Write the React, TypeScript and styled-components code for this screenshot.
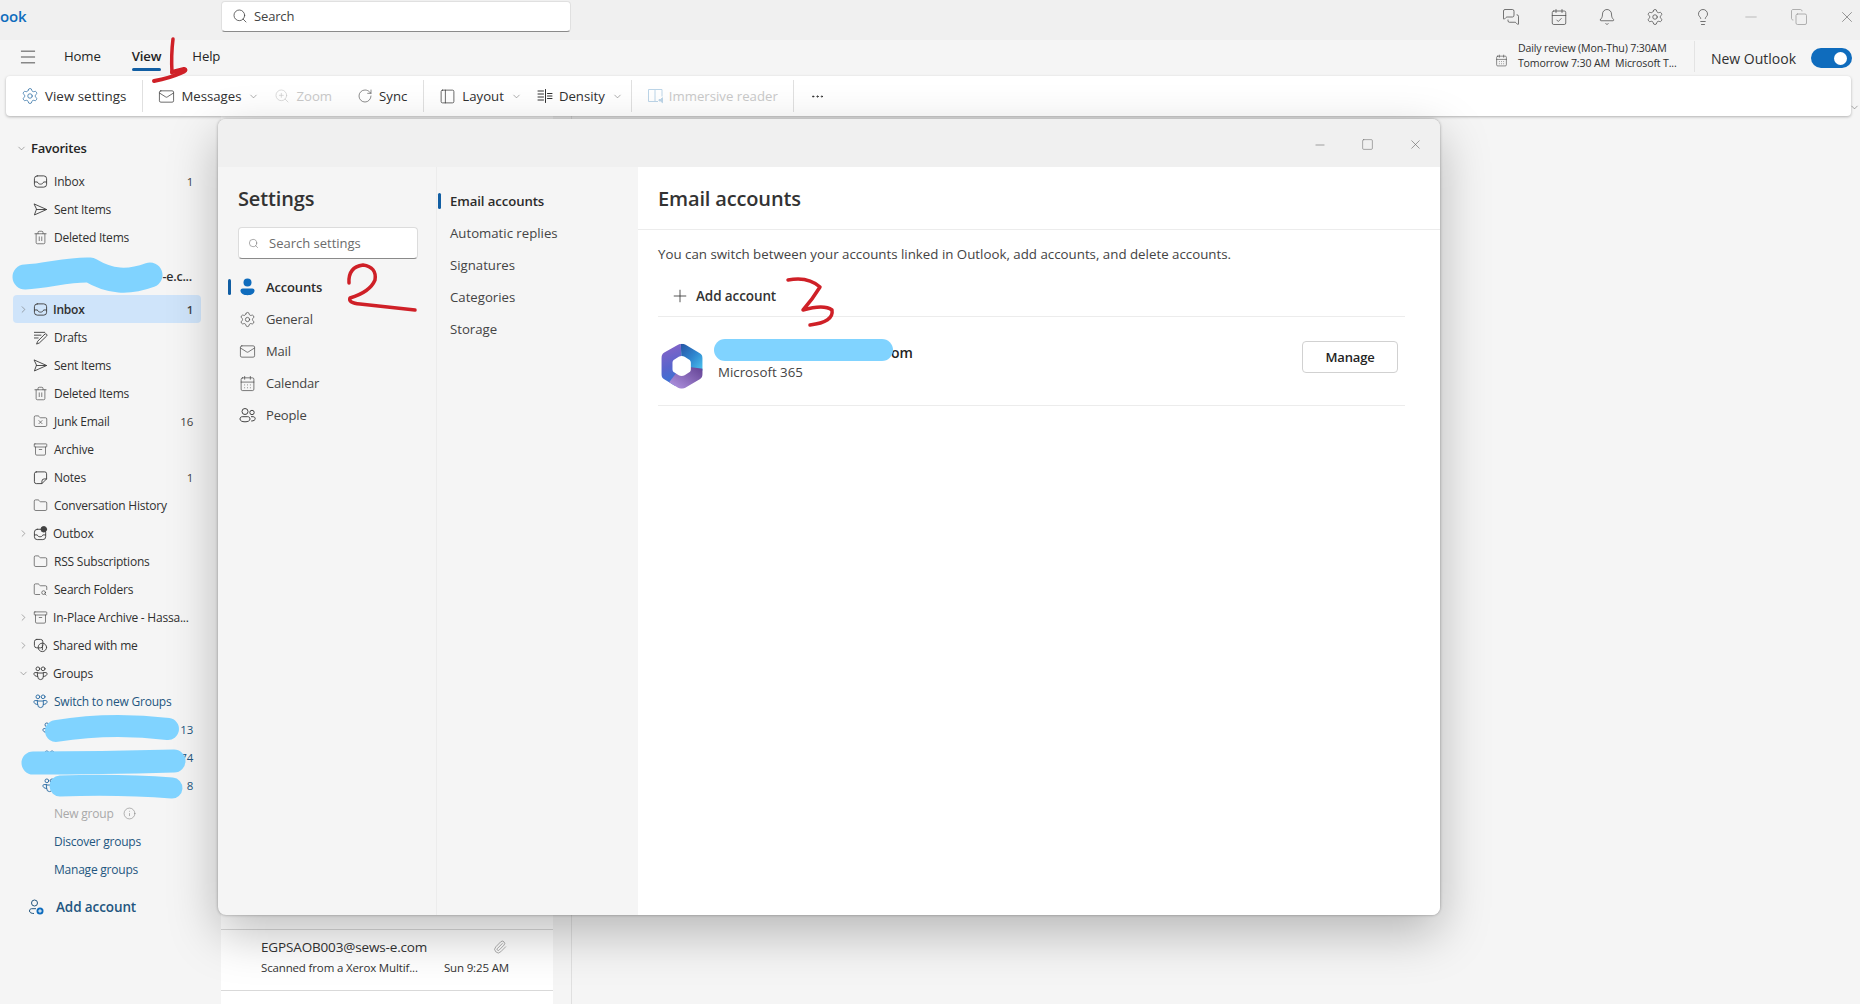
import React from "react";
import styled, { createGlobalStyle } from "styled-components";
import {
  Archive, Bell, CalendarCheck, CalendarDays, ChevronDown, ChevronRight, Copy, Folder, FolderSearch,
  FolderX, Info, Lightbulb, Mail, Menu, MessagesSquare, Minus, MoreHorizontal, PanelLeft, Paperclip, Plus,
  RotateCw, Search, Settings, Square, Trash2, X, ZoomIn,
} from "lucide-react";

const font = `"Open Sans", "Noto Sans", "Liberation Sans", sans-serif`;

const Global = createGlobalStyle`
  html, body { margin: 0; padding: 0; background: #f5f5f5; overflow: hidden; }
  body { font-family: ${font}; color: #242424; letter-spacing: -0.15px; }
  * { box-sizing: border-box; }
`;

const Page = styled.div`
  position: relative;
  width: 1860px;
  height: 1004px;
  overflow: hidden;
  display: flex;
  flex-direction: column;
  background: #f5f5f5;
`;

/* ---------- Title bar ---------- */
const TitleBar = styled.header`
  height: 40px;
  flex: none;
  display: flex;
  align-items: flex-start;
  background: #f0f0f0;
  padding-right: 4px;
`;
const Brand = styled.div`
  width: 221px;
  padding-top: 6px;
  font-size: 15px;
  line-height: 20px;
  font-weight: 600;
  color: #0f6cbd;
`;
const GlobalSearch = styled.div`
  width: 350px;
  height: 31px;
  margin-top: 1px;
  display: flex;
  align-items: center;
  gap: 6px;
  padding: 0 0 2px 10px;
  background: #fff;
  border: 1px solid #e0e0e0;
  border-bottom-color: #8a8a8a;
  border-radius: 4px;
  font-size: 13px;
  color: #424242;
`;
const TitleIcons = styled.div`
  margin-left: auto;
  display: flex;
  gap: 30px;
  padding-top: 8px;
  color: #4a4a4a;
`;

/* ---------- Tabs row ---------- */
const TabRow = styled.nav`
  height: 36px;
  flex: none;
  display: flex;
  align-items: center;
  padding-left: 18px;
  background: #f5f5f5;
`;
const Burger = styled.span`
  display: flex;
  width: 46px;
  margin-bottom: 2px;
  color: #424242;
`;
const Tab = styled.span<{ $active?: boolean }>`
  position: relative;
  margin-right: 31px;
  padding-bottom: 4px;
  font-size: 13.2px;
  line-height: 30px;
  font-weight: ${(p) => (p.$active ? 600 : 400)};
  color: #242424;
  &::after {
    content: "";
    display: ${(p) => (p.$active ? "block" : "none")};
    position: absolute;
    left: 0;
    right: 0;
    bottom: 4px;
    height: 3px;
    border-radius: 2px;
    background: #115ea3;
  }
`;
const Reminder = styled.div`
  margin-left: auto;
  display: flex;
  align-items: center;
  gap: 10px;
  color: #424242;
`;
const ReminderGlyph = styled.span`
  display: flex;
  margin-top: 4px;
`;
const ReminderText = styled.div`
  width: 177px;
  margin-bottom: 4px;
  border-right: 1px solid #e3e3e3;
  font-size: 10.6px;
  line-height: 15.5px;
  white-space: nowrap;
  color: #303030;
`;
const NewOutlook = styled.span`
  margin-left: 6px;
  margin-right: 5px;
  font-size: 14px;
  font-weight: 500;
  letter-spacing: 0;
  color: #303030;
`;
const Toggle = styled.span`
  width: 41px;
  height: 20px;
  margin-right: 8px;
  display: flex;
  align-items: center;
  justify-content: flex-end;
  padding-right: 5px;
  border-radius: 10px;
  background: #0f6cbd;
  &::after {
    content: "";
    width: 13px;
    height: 13px;
    border-radius: 50%;
    background: #fff;
  }
`;

/* ---------- Ribbon ---------- */
const Ribbon = styled.div`
  position: relative;
  z-index: 1;
  flex: none;
  height: 40px;
  margin: 0 9px 0 6px;
  display: flex;
  align-items: center;
  background: #fff;
  border-radius: 4px;
  box-shadow: 0 1px 3px rgba(0, 0, 0, 0.28);
`;
const RibbonGroup = styled.div<{ $left: number; $right: number }>`
  height: 32px;
  display: flex;
  align-items: center;
  padding: 0 ${(p) => p.$right}px 0 ${(p) => p.$left}px;
  border-right: 1px solid #e0e0e0;
`;
const RibbonItem = styled.span<{ $off?: boolean; $after?: number; $gap?: number; $wide?: boolean }>`
  display: flex;
  align-items: center;
  gap: ${(p) => p.$gap ?? 6}px;
  margin-right: ${(p) => p.$after ?? 0}px;
  font-size: ${(p) => (p.$wide ? 13.4 : 13.2)}px;
  letter-spacing: 0;
  color: ${(p) => (p.$off ? "#c9c9c9" : "#303030")};
  white-space: nowrap;
`;
const Caret = styled.span`
  display: flex;
  margin-left: 1px;
  color: #6b6b6b;
`;
const Dots = styled.span`
  display: flex;
  margin-left: 16px;
  color: #303030;
`;
const RibbonCorner = styled.span`
  position: absolute;
  right: -9px;
  top: 26px;
  display: flex;
  color: #555;
`;

/* ---------- Body ---------- */
const Body = styled.div`
  flex: 1;
  display: flex;
  min-height: 0;
`;
const Sidebar = styled.aside`
  width: 218px;
  flex: none;
  padding-top: 18px;
  font-size: 12px;
  letter-spacing: -0.22px;
`;
const SectionHead = styled.div`
  height: 28px;
  margin: 0 0 5px 13px;
  display: flex;
  align-items: center;
  font-size: 13px;
  font-weight: 600;
  color: #242424;
`;
const HeadCaret = styled.span`
  display: flex;
  width: 18px;
  padding-left: 3px;
  color: #666;
`;
const Row = styled.div<{ $active?: boolean; $tone?: "link" | "off" }>`
  height: 28px;
  margin: 0 17px 0 13px;
  padding-right: 8px;
  display: flex;
  align-items: center;
  border-radius: 4px;
  background: ${(p) => (p.$active ? "#cfe4fa" : "transparent")};
  font-weight: ${(p) => (p.$active ? 600 : 400)};
  color: ${(p) => (p.$tone === "link" ? "#23567f" : p.$tone === "off" ? "#a9a9a9" : "#303030")};
  white-space: nowrap;
`;
const RowCaret = styled.span<{ $indent?: boolean }>`
  width: ${(p) => (p.$indent ? 29 : 20)}px;
  flex: none;
  display: flex;
  justify-content: center;
  color: #666;
`;
const RowIcon = styled.span<{ $tone?: "link" | "off" }>`
  width: 15px;
  flex: none;
  display: flex;
  color: ${(p) => (p.$tone === "link" ? "#2b6ca3" : "#424242")};
`;
const RowLabel = styled.span<{ $nudge?: boolean }>`
  margin-left: ${(p) => (p.$nudge ? 6 : 5)}px;
`;
const RowCount = styled.span<{ $tone?: "link" }>`
  margin-left: auto;
  font-size: 11.5px;
  color: ${(p) => (p.$tone === "link" ? "#23567f" : "#424242")};
`;
const AccountHead = styled.div`
  height: 28px;
  margin: 11px 26px 5px 13px;
  display: flex;
  align-items: center;
  justify-content: flex-end;
  font-size: 12.5px;
  font-weight: 600;
  color: #303030;
`;
const GroupNote = styled.span`
  display: flex;
  margin-left: 9px;
  color: #777;
`;
const AddAccountRow = styled.div`
  height: 28px;
  margin: 10px 0 0 28px;
  display: flex;
  align-items: center;
  gap: 12px;
  font-size: 13.5px;
  font-weight: 600;
  letter-spacing: -0.1px;
  color: #23567f;
`;

/* ---------- Message list behind the dialog ---------- */
const Main = styled.main`
  flex: 1;
  display: flex;
  padding-left: 3px;
  background: #f5f5f5;
`;
const ListColumn = styled.div`
  width: 351px;
  border-right: 1px solid #e0e0e0;
  padding-right: 18px;
`;
const List = styled.div`
  padding-top: 813px;
  height: 100%;
  background: #fff;
`;
const Message = styled.div`
  height: 61px;
  padding: 5px 0 0 40px;
  border-top: 1px solid #d9d9d9;
  font-size: 12px;
`;
const MessageTop = styled.div`
  display: flex;
  align-items: center;
  justify-content: space-between;
  padding-right: 46px;
  font-size: 13.5px;
  line-height: 24px;
  color: #333;
`;
const MessageBottom = styled.div`
  display: flex;
  justify-content: space-between;
  padding-right: 44px;
  font-size: 11.5px;
  line-height: 18px;
  color: #333;
`;

/* ---------- Settings dialog ---------- */
const Dialog = styled.section`
  position: absolute;
  left: 218px;
  top: 119px;
  width: 1222px;
  height: 796px;
  z-index: 2;
  display: flex;
  flex-direction: column;
  overflow: hidden;
  background: #f5f5f5;
  border-radius: 8px;
  box-shadow: 0 0 3px rgba(0, 0, 0, 0.35), 0 18px 50px rgba(0, 0, 0, 0.26);
`;
const DialogBar = styled.div`
  height: 48px;
  flex: none;
  display: flex;
  align-items: center;
  justify-content: flex-end;
  gap: 34px;
  padding: 3px 17px 0 0;
  background: #f0f0f0;
  color: #666;
`;
const DialogBody = styled.div`
  flex: 1;
  display: flex;
  min-height: 0;
`;
const NavOne = styled.div`
  width: 219px;
  flex: none;
  border-right: 1px solid #ececec;
  padding: 18px 0 0 10px;
`;
const SettingsTitle = styled.h1`
  margin: 0 0 14px 10px;
  font-size: 20px;
  line-height: 28px;
  font-weight: 600;
  color: #333;
`;
const SettingsSearch = styled.div`
  width: 180px;
  height: 32px;
  margin: 0 0 12px 10px;
  display: flex;
  align-items: center;
  gap: 10px;
  padding-left: 9px;
  background: #fff;
  border: 1px solid #dcdcdc;
  border-bottom-color: #8a8a8a;
  border-radius: 4px;
  font-size: 13px;
  letter-spacing: 0;
  color: #6b6b6b;
`;
const NavItem = styled.div<{ $active?: boolean }>`
  position: relative;
  height: 32px;
  display: flex;
  align-items: center;
  gap: 10px;
  padding-left: 11px;
  font-size: 13px;
  font-weight: ${(p) => (p.$active ? 600 : 400)};
  color: ${(p) => (p.$active ? "#2b2b2b" : "#444")};
  &::before {
    content: "";
    display: ${(p) => (p.$active ? "block" : "none")};
    position: absolute;
    left: 0;
    top: 8px;
    width: 3px;
    height: 16px;
    border-radius: 2px;
    background: #115ea3;
  }
`;
const NavGlyph = styled.span<{ $blue?: boolean }>`
  display: flex;
  width: 17px;
  color: ${(p) => (p.$blue ? "#0f6cbd" : "#444")};
`;
const NavTwo = styled.div`
  width: 201px;
  flex: none;
  padding-top: 17.5px;
`;
const SubItem = styled.div<{ $active?: boolean }>`
  position: relative;
  height: 32px;
  display: flex;
  align-items: center;
  padding-left: 13px;
  font-size: 13.2px;
  letter-spacing: ${(p) => (p.$active ? "-0.1px" : "0")};
  font-weight: ${(p) => (p.$active ? 600 : 400)};
  color: ${(p) => (p.$active ? "#2b2b2b" : "#444")};
  &::before {
    content: "";
    display: ${(p) => (p.$active ? "block" : "none")};
    position: absolute;
    left: 1px;
    top: 8px;
    width: 3px;
    height: 16px;
    border-radius: 2px;
    background: #115ea3;
  }
`;
const Content = styled.div`
  flex: 1;
  background: #fff;
`;
const ContentHead = styled.div`
  height: 63px;
  padding: 18px 0 0 20px;
  border-bottom: 1px solid #ececec;
  font-size: 20px;
  line-height: 28px;
  font-weight: 600;
  color: #333;
`;
const ContentBody = styled.div`
  padding: 14px 35px 0 20px;
`;
const Lead = styled.p`
  margin: 0;
  font-size: 13.3px;
  letter-spacing: 0;
  line-height: 20px;
  color: #444;
`;
const AddRow = styled.div`
  height: 53px;
  display: flex;
  align-items: center;
  gap: 6px;
  padding: 12px 0 0 12px;
  border-bottom: 1px solid #ececec;
  font-size: 13.5px;
  letter-spacing: -0.1px;
  font-weight: 600;
  color: #333;
`;
const AccountRow = styled.div`
  height: 89px;
  display: flex;
  align-items: center;
  padding: 0 7px 0 3px;
  border-bottom: 1px solid #ececec;
`;
const LogoSlot = styled.span`
  display: flex;
  margin-top: 9px;
`;
const AccountText = styled.div`
  margin-left: 15px;
  flex: 1;
  margin-top: 1px;
`;
const AccountMail = styled.div`
  padding-left: 173px;
  font-size: 14px;
  line-height: 20px;
  font-weight: 600;
  color: #242424;
`;
const AccountKind = styled.div`
  font-size: 13.3px;
  letter-spacing: 0;
  line-height: 18px;
  color: #444;
`;
const ManageButton = styled.button`
  width: 96px;
  height: 32px;
  margin-bottom: 8px;
  background: #fff;
  border: 1px solid #d1d1d1;
  border-radius: 4px;
  font-family: ${font};
  font-size: 13px;
  font-weight: 600;
  letter-spacing: -0.15px;
  color: #242424;
`;

/* ---------- Scribbles painted over the screenshot ---------- */
const Scribbles = styled.svg`
  position: absolute;
  inset: 0;
  z-index: 3;
  pointer-events: none;
`;

/* ---------- Drawn icons ---------- */
const Ic = ({ children, size = 14, vb = 16 }: { children: React.ReactNode; size?: number; vb?: number }) => (
  <svg width={size} height={size} viewBox={`0 0 ${vb} ${vb}`} fill="none" stroke="currentColor" strokeWidth={1} strokeLinejoin="round" strokeLinecap="round">
    {children}
  </svg>
);
const InboxIcon = () => (
  <Ic size={15}>
    <rect x="1.500" y="2" width="13" height="12" rx="3" />
    <path d="M1.500 8.500h3.200c.5 1.600 1.700 2.300 3.300 2.300s2.800-.7 3.300-2.300h3.200" />
  </Ic>
);
const SendIcon = () => (
  <Ic size={15}>
    <path d="M1.500 2.200 14.500 8 1.500 13.800 3.600 8zM3.600 8h10.900" />
  </Ic>
);
const DraftIcon = () => (
  <Ic size={15}>
    <path d="M1.500 2.500h11M1.500 5.500h7M1.500 8.500h4" />
    <path d="M12.500 4.500 5 12l-1.200 3 3-1.200L14.500 6.500a1.400 1.400 0 0 0-2-2z" />
  </Ic>
);
const NoteIcon = () => (
  <Ic size={15}>
    <path d="M3.500 2h9a2 2 0 0 1 2 2v5.500l-5 5H3.500a2 2 0 0 1-2-2V4a2 2 0 0 1 2-2z" />
    <path d="M9.500 14.500V12a2.500 2.500 0 0 1 2.500-2.500h2.500" />
  </Ic>
);
const OutboxIcon = () => (
  <Ic size={15}>
    <rect x="1.500" y="3.500" width="12" height="11" rx="3" />
    <path d="M1.500 9.500h3c.5 1.400 1.500 2 3 2s2.500-.6 3-2h3" />
    <circle cx="11.500" cy="3.500" r="3" fill="currentColor" />
  </Ic>
);
const SharedIcon = () => (
  <Ic size={15}>
    <rect x="1.500" y="1.500" width="9" height="9" rx="2.500" />
    <circle cx="10" cy="10" r="4.500" />
    <path d="M10 7.500v5" />
  </Ic>
);
const GroupIcon = () => (
  <Ic size={15}>
    <circle cx="5.200" cy="3" r="2" />
    <circle cx="10.800" cy="3" r="2" />
    <path d="M5 7.500h6v4a3 3 0 0 1-6 0z" />
    <path d="M5 7H2.200C1.400 7 1 7.500 1 8.200c0 1.600 1.200 2.800 4 3M11 7h2.800c.8 0 1.200.5 1.200 1.200 0 1.600-1.200 2.800-4 3" />
  </Ic>
);
const DensityIcon = () => (
  <Ic size={16}>
    <path d="M1 3h5.500M1 6h5.500M1 9h5.500M1 12h5.500M8.500 1.500v13M10.500 5.500H15M10.500 8H15M10.500 10.500H15" />
  </Ic>
);
const ReaderIcon = () => (
  <svg width="18" height="18" viewBox="0 0 18 18" fill="none" stroke="#bcd5e8" strokeWidth="1">
    <path d="M1.500 2.500h6.500v12H1.500zM8 2.500h7v7M8 14.500h3" />
    <path d="M12 12.500h1.500l2-1.800v5l-2-1.800H12z" fill="#bcd5e8" />
  </svg>
);
const PersonSolid = () => (
  <svg width="17" height="18" viewBox="0 0 17 18" fill="#0f6cbd">
    <circle cx="8.500" cy="4.500" r="4" />
    <path d="M1.500 12.500c0-1.300 1-2 2.200-2h9.600c1.200 0 2.200.7 2.200 2 0 3-3 4.700-7 4.700s-7-1.700-7-4.700z" />
  </svg>
);
const PeopleIcon = () => (
  <svg width="17" height="16" viewBox="0 0 17 16" fill="none" stroke="currentColor" strokeWidth="1">
    <circle cx="6" cy="4.500" r="3" />
    <path d="M1 12c0-1.500 1-2.300 2.200-2.300h5.600c1.200 0 2.200.8 2.200 2.300 0 1.800-2 2.800-5 2.800s-5-1-5-2.800z" />
    <circle cx="13" cy="5.500" r="2.200" />
    <path d="M12 9.700h2c1.200 0 2.200.7 2.200 2s-1.300 2.300-4 2.300" />
  </svg>
);
const AddPersonIcon = () => (
  <svg width="16" height="16" viewBox="0 0 16 16" fill="none" stroke="#23567f" strokeWidth="1">
    <circle cx="6.500" cy="4" r="3" />
    <path d="M1.500 12c0-1.500 1-2.300 2.200-2.300H8M1.500 12c0 1.600 2 2.500 4.500 2.500" />
    <circle cx="12" cy="12" r="3.500" fill="#0f6cbd" stroke="none" />
    <path d="M12 10.200v3.600M10.200 12h3.600" stroke="#fff" />
  </svg>
);
const M365Logo = () => (
  <svg width="42" height="46" viewBox="32 38 128 140">
    <defs>
      <linearGradient id="mL" x1="0.300" y1="0" x2="0.500" y2="1">
        <stop offset="0" stopColor="#9163c6" />
        <stop offset="0.550" stopColor="#5a64cc" />
        <stop offset="1" stopColor="#2f79d6" />
      </linearGradient>
      <linearGradient id="mR" x1="0" y1="0" x2="1" y2="1">
        <stop offset="0" stopColor="#254f9e" />
        <stop offset="0.500" stopColor="#2f86cf" />
        <stop offset="1" stopColor="#52d2f6" />
      </linearGradient>
      <linearGradient id="mB" x1="0" y1="1" x2="1" y2="0">
        <stop offset="0" stopColor="#bca0ec" />
        <stop offset="1" stopColor="#5b3a8c" />
      </linearGradient>
      <clipPath id="mHex">
        <path d="M84 43c7-4 16-4 23 0l42 25c7 4 10 9 10 16v48c0 7-3 12-9 16l-44 26c-7 4-15 4-22 0l-41-25c-7-4-10-9-10-16V84c0-7 3-13 9-17z" />
      </clipPath>
    </defs>
    <g clipPath="url(#mHex)">
      <path d="M95 108 92 30 20 70V180H70z" fill="url(#mL)" />
      <path d="M95 108 92 30 170 70V125z" fill="url(#mR)" />
      <path d="M95 108 170 118V140L95 190 55 160z" fill="url(#mB)" />
    </g>
    <path d="M86 80c5-3 13-3 18 0l13 8c4 2 6 6 6 10v20c0 4-2 8-6 10l-13 8c-5 3-13 3-18 0l-13-8c-4-2-6-6-6-10V98c0-4 2-8 6-10z" fill="#fff" />
  </svg>
);

const IconSize = { size: 15, strokeWidth: 1.05 };

type FolderItem = {
  label?: string;
  icon: React.ReactNode;
  caret?: "right" | "down";
  count?: string;
  active?: boolean;
  tone?: "link" | "off";
  note?: boolean;
  indent?: boolean;
};

const favourites: FolderItem[] = [
  { label: "Inbox", icon: <InboxIcon />, count: "1" },
  { label: "Sent Items", icon: <SendIcon /> },
  { label: "Deleted Items", icon: <Trash2 {...IconSize} /> },
];
const mailbox: FolderItem[] = [
  { label: "Inbox", icon: <InboxIcon />, caret: "right", count: "1", active: true },
  { label: "Drafts", icon: <DraftIcon /> },
  { label: "Sent Items", icon: <SendIcon /> },
  { label: "Deleted Items", icon: <Trash2 {...IconSize} /> },
  { label: "Junk Email", icon: <FolderX {...IconSize} />, count: "16" },
  { label: "Archive", icon: <Archive {...IconSize} /> },
  { label: "Notes", icon: <NoteIcon />, count: "1" },
  { label: "Conversation History", icon: <Folder {...IconSize} /> },
  { label: "Outbox", icon: <OutboxIcon />, caret: "right" },
  { label: "RSS Subscriptions", icon: <Folder {...IconSize} /> },
  { label: "Search Folders", icon: <FolderSearch {...IconSize} /> },
  { label: "In-Place Archive - Hassa...", icon: <Archive {...IconSize} />, caret: "right" },
  { label: "Shared with me", icon: <SharedIcon />, caret: "right" },
  { label: "Groups", icon: <GroupIcon />, caret: "down" },
  { label: "Switch to new Groups", icon: <GroupIcon />, tone: "link" },
  { icon: <GroupIcon />, count: "13", tone: "link", indent: true },
  { icon: <GroupIcon />, count: "74", tone: "link", indent: true },
  { icon: <GroupIcon />, count: "8", tone: "link", indent: true },
  { label: "New group", icon: null, tone: "off", note: true },
  { label: "Discover groups", icon: null, tone: "link" },
  { label: "Manage groups", icon: null, tone: "link" },
];

const FolderRow = ({ f }: { f: FolderItem }) => (
  <Row $active={f.active} $tone={f.tone}>
    <RowCaret $indent={f.indent}>
      {f.caret === "right" && <ChevronRight size={11} strokeWidth={1.2} />}
      {f.caret === "down" && <ChevronDown size={11} strokeWidth={1.2} />}
    </RowCaret>
    <RowIcon $tone={f.tone}>{f.icon}</RowIcon>
    {f.label && <RowLabel $nudge={!f.caret}>{f.label}</RowLabel>}
    {f.note && (
      <GroupNote>
        <Info size={13} strokeWidth={1} />
      </GroupNote>
    )}
    {f.count && <RowCount $tone={f.tone === "link" ? "link" : undefined}>{f.count}</RowCount>}
  </Row>
);

const Chev = () => (
  <Caret>
    <ChevronDown size={11} strokeWidth={1.2} />
  </Caret>
);

export default function App() {
  return (
    <Page>
      <Global />
      <TitleBar>
        <Brand>ook</Brand>
        <GlobalSearch>
          <Search size={16} strokeWidth={1.2} />
          Search
        </GlobalSearch>
        <TitleIcons>
          <MessagesSquare size={18} strokeWidth={1} />
          <CalendarCheck size={18} strokeWidth={1} />
          <Bell size={18} strokeWidth={1} />
          <Settings size={18} strokeWidth={1} />
          <Lightbulb size={18} strokeWidth={1} />
          <Minus size={18} strokeWidth={1} color="#aaa" />
          <Copy size={18} strokeWidth={1} color="#999" />
          <X size={18} strokeWidth={1} color="#777" />
        </TitleIcons>
      </TitleBar>

      <TabRow>
        <Burger>
          <Menu size={20} strokeWidth={1.1} />
        </Burger>
        <Tab>Home</Tab>
        <Tab $active>View</Tab>
        <Tab>Help</Tab>
        <Reminder>
          <ReminderGlyph>
            <CalendarDays size={13} strokeWidth={1.1} />
          </ReminderGlyph>
          <ReminderText>
            Daily review (Mon-Thu) 7:30AM
            <br />
            Tomorrow 7:30 AM&nbsp; Microsoft T...
          </ReminderText>
          <NewOutlook>New Outlook</NewOutlook>
          <Toggle />
        </Reminder>
      </TabRow>

      <Ribbon>
        <RibbonGroup $left={15} $right={16}>
          <RibbonItem $wide>
            <Settings size={18} strokeWidth={1} color="#2b6ca3" />
            View settings
          </RibbonItem>
        </RibbonGroup>
        <RibbonGroup $left={15} $right={16}>
          <RibbonItem $after={15}>
            <Mail size={17} strokeWidth={1} />
            Messages
            <Chev />
          </RibbonItem>
          <RibbonItem $off $after={25}>
            <ZoomIn size={16} strokeWidth={1} />
            Zoom
          </RibbonItem>
          <RibbonItem>
            <RotateCw size={16} strokeWidth={1} color="#555" />
            Sync
          </RibbonItem>
        </RibbonGroup>
        <RibbonGroup $left={15} $right={8}>
          <RibbonItem $after={15}>
            <PanelLeft size={17} strokeWidth={1} />
            Layout
            <Chev />
          </RibbonItem>
          <RibbonItem>
            <DensityIcon />
            Density
            <Chev />
          </RibbonItem>
        </RibbonGroup>
        <RibbonGroup $left={15} $right={15}>
          <RibbonItem $off $gap={4}>
            <ReaderIcon />
            Immersive reader
          </RibbonItem>
        </RibbonGroup>
        <Dots>
          <MoreHorizontal size={15} strokeWidth={1.6} />
        </Dots>
        <RibbonCorner>
          <ChevronDown size={11} strokeWidth={1.1} />
        </RibbonCorner>
      </Ribbon>

      <Body>
        <Sidebar>
          <SectionHead>
            <HeadCaret>
              <ChevronDown size={11} strokeWidth={1.2} />
            </HeadCaret>
            Favorites
          </SectionHead>
          {favourites.map((f) => (
            <FolderRow key={f.label} f={f} />
          ))}
          <AccountHead>-e.c...</AccountHead>
          {mailbox.map((f, i) => (
            <FolderRow key={i} f={f} />
          ))}
          <AddAccountRow>
            <AddPersonIcon />
            Add account
          </AddAccountRow>
        </Sidebar>
        <Main>
          <ListColumn>
            <List>
              <Message>
                <MessageTop>
                  EGPSAOB003@sews-e.com
                  <Paperclip size={14} strokeWidth={1} color="#777" />
                </MessageTop>
                <MessageBottom>
                  <span>Scanned from a Xerox Multif...</span>
                  <span>Sun 9:25 AM</span>
                </MessageBottom>
              </Message>
              <Message />
            </List>
          </ListColumn>
        </Main>
      </Body>

      <Dialog>
        <DialogBar>
          <Minus size={14} strokeWidth={1} />
          <Square size={13} strokeWidth={1} />
          <X size={15} strokeWidth={1} />
        </DialogBar>
        <DialogBody>
          <NavOne>
            <SettingsTitle>Settings</SettingsTitle>
            <SettingsSearch>
              <Search size={11} strokeWidth={1.2} />
              Search settings
            </SettingsSearch>
            <NavItem $active>
              <NavGlyph $blue>
                <PersonSolid />
              </NavGlyph>
              Accounts
            </NavItem>
            <NavItem>
              <NavGlyph>
                <Settings size={17} strokeWidth={1} />
              </NavGlyph>
              General
            </NavItem>
            <NavItem>
              <NavGlyph>
                <Mail size={17} strokeWidth={1} />
              </NavGlyph>
              Mail
            </NavItem>
            <NavItem>
              <NavGlyph>
                <CalendarDays size={17} strokeWidth={1} />
              </NavGlyph>
              Calendar
            </NavItem>
            <NavItem>
              <NavGlyph>
                <PeopleIcon />
              </NavGlyph>
              People
            </NavItem>
          </NavOne>
          <NavTwo>
            <SubItem $active>Email accounts</SubItem>
            <SubItem>Automatic replies</SubItem>
            <SubItem>Signatures</SubItem>
            <SubItem>Categories</SubItem>
            <SubItem>Storage</SubItem>
          </NavTwo>
          <Content>
            <ContentHead>Email accounts</ContentHead>
            <ContentBody>
              <Lead>You can switch between your accounts linked in Outlook, add accounts, and delete accounts.</Lead>
              <AddRow>
                <Plus size={20} strokeWidth={1} />
                Add account
              </AddRow>
              <AccountRow>
                <LogoSlot>
                  <M365Logo />
                </LogoSlot>
                <AccountText>
                  <AccountMail>om</AccountMail>
                  <AccountKind>Microsoft 365</AccountKind>
                </AccountText>
                <ManageButton>Manage</ManageButton>
              </AccountRow>
            </ContentBody>
          </Content>
        </DialogBody>
      </Dialog>

      <Scribbles width="1860" height="1004" viewBox="0 0 1860 1004" fill="none" strokeLinecap="round" strokeLinejoin="round">
        <g stroke="#80d3ff">
          <path d="M25 277C48 276 68 269 90 270C110 282 128 283 150 275" strokeWidth="25" />
          <path d="M56 731Q110 722 168 729" strokeWidth="22" />
          <path d="M33 763Q100 763 174 761" strokeWidth="23" />
          <path d="M60 786Q120 784 172 788" strokeWidth="21" />
          <path d="M725 350L882 350" strokeWidth="22" />
        </g>
        <g stroke="#cf2027" strokeWidth="3.500">
          <path d="M173 39Q171 55 172 73" />
          <path d="M154 81Q170 78 181 73Q188 70 184 69L172 72" strokeWidth="4" />
          <path d="M349 283Q348 267 363 265Q377 267 375 280Q370 292 350 298Q348 303 360 304L415 310" />
          <path d="M788 280Q808 276 820 287Q812 300 803 310Q824 304 832 310Q834 322 810 325" />
        </g>
      </Scribbles>
    </Page>
  );
}
